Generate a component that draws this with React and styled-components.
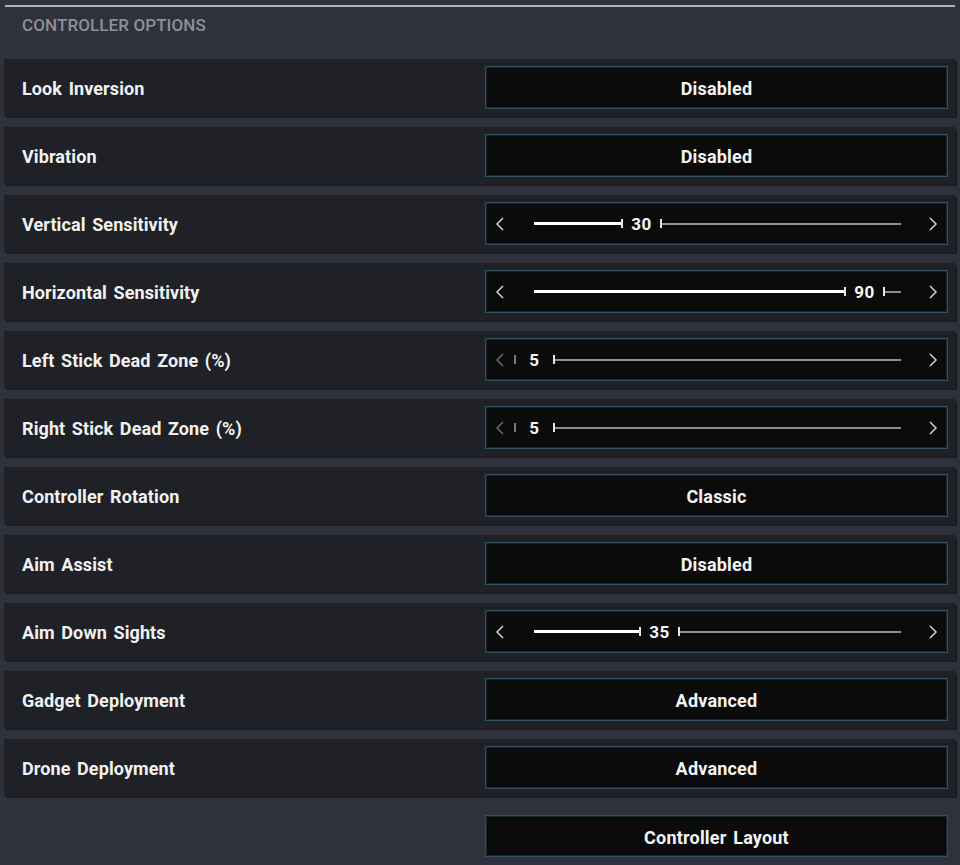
import React from "react";
import styled, { createGlobalStyle } from "styled-components";

const Global = createGlobalStyle`
  html, body {
    margin: 0;
    padding: 0;
    background: #2f323c;
  }
  body {
    min-height: 865px;
    font-family: Roboto, "Liberation Sans", sans-serif;
  }
`;

const Page = styled.div`
  padding: 5px 5px 0 4px;
  box-sizing: border-box;
  width: 960px;
  height: 865px;
  overflow: hidden;
`;

const TopRule = styled.div`
  height: 2px;
  margin-left: 1px;
  background: #aeb2ba;
`;

const Header = styled.h2`
  margin: 0;
  height: 52px;
  padding-left: 18px;
  line-height: 37px;
  font-size: 17px;
  font-weight: 500;
  color: #8c9098;
  letter-spacing: 0.1px;
`;

const List = styled.div`
  display: flex;
  flex-direction: column;
  gap: 11px;
`;

const Row = styled.div`
  display: grid;
  grid-template-columns: 1fr 463px;
  align-items: center;
  height: 57px;
  box-sizing: border-box;
  padding: 7px 7px 7px 18px;
  background: #1f2127;
  box-shadow: 2px 2px 0 #1a1c21;
`;

const Footer = styled.div`
  display: grid;
  grid-template-columns: 1fr 463px;
  padding: 0 7px 0 18px;
  margin-top: 19px;
`;

const Label = styled.span`
  font-size: 18px;
  font-weight: 700;
  color: #f1f1f1;
  letter-spacing: 0.1px;
  word-spacing: 2px;
  padding-top: 2px;
`;

const Box = styled.div`
  height: ${(p) => p.$h || 43}px;
  box-sizing: border-box;
  background: #0b0b0c;
  border: 1px solid #2c5163;
  box-shadow: inset 0 0 0 1px #16262e;
  display: flex;
  align-items: center;
`;

const Choice = styled(Box)`
  justify-content: center;
  padding-top: 2px;
  font-size: 18px;
  font-weight: 700;
  color: #f4f4f4;
  letter-spacing: 0.2px;
  word-spacing: 2px;
`;

const Slider = styled(Box)`
  padding: 0 9px;
`;

const Chevron = styled.svg`
  width: 10px;
  height: 14px;
  flex: none;
  color: ${(p) => (p.$dim ? "#6a6b6e" : "#cfcfcf")};
`;

const Track = styled.div`
  flex: 1;
  display: flex;
  align-items: center;
  margin: 0 27px 0 9px;
`;

const Fill = styled.div`
  height: 3px;
  margin-left: 20px;
  background: #ffffff;
  flex: none;
`;

const Tick = styled.div`
  width: 2px;
  height: 9px;
  flex: none;
  background: ${(p) => (p.$dim ? "#77787b" : "#e6e6e6")};
`;

const Value = styled.span`
  width: 37px;
  flex: none;
  text-align: center;
  padding-top: 1px;
  font-size: 17px;
  font-weight: 700;
  color: #f4f4f4;
  letter-spacing: 0.6px;
`;

const Line = styled.div`
  flex: 1;
  height: 2px;
  background: #8e8e8e;
`;

const ChevronIcon = ({ dir, dim }) => (
  <Chevron viewBox="0 0 10 14" $dim={dim}>
    <path
      d={dir === "left" ? "M8 1 L2 7 L8 13" : "M2 1 L8 7 L2 13"}
      fill="none"
      stroke="currentColor"
      strokeWidth="1.5"
    />
  </Chevron>
);

const SliderControl = ({ value, fill }) => {
  const atMin = fill == null;
  return (
    <Slider>
      <ChevronIcon dir="left" dim={atMin} />
      <Track>
        {!atMin && <Fill style={{ width: fill }} />}
        <Tick $dim={atMin} />
        <Value>{value}</Value>
        <Tick />
        <Line />
      </Track>
      <ChevronIcon dir="right" />
    </Slider>
  );
};

const rows = [
  { label: "Look Inversion", choice: "Disabled" },
  { label: "Vibration", choice: "Disabled" },
  { label: "Vertical Sensitivity", value: 30, fill: 87 },
  { label: "Horizontal Sensitivity", value: 90, fill: 310 },
  { label: "Left Stick Dead Zone (%)", value: 5, fill: null },
  { label: "Right Stick Dead Zone (%)", value: 5, fill: null },
  { label: "Controller Rotation", choice: "Classic" },
  { label: "Aim Assist", choice: "Disabled" },
  { label: "Aim Down Sights", value: 35, fill: 105 },
  { label: "Gadget Deployment", choice: "Advanced" },
  { label: "Drone Deployment", choice: "Advanced" },
];

export default function App() {
  return (
    <Page>
      <Global />
      <TopRule />
      <Header>CONTROLLER OPTIONS</Header>
      <List>
        {rows.map((r) => (
          <Row key={r.label}>
            <Label>{r.label}</Label>
            {r.choice ? (
              <Choice>{r.choice}</Choice>
            ) : (
              <SliderControl value={r.value} fill={r.fill} />
            )}
          </Row>
        ))}
      </List>
      <Footer>
        <span />
        <Choice $h={42}>Controller Layout</Choice>
      </Footer>
    </Page>
  );
}
